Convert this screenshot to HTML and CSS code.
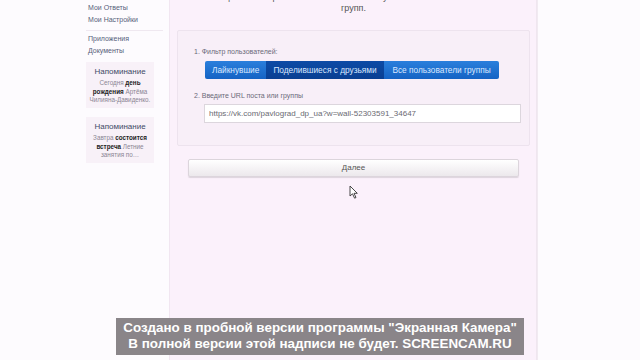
FILE: index.html
```html
<!DOCTYPE html>
<html lang="ru">
<head>
    <meta charset="UTF-8">
    <title>Парсер пользователей</title>
    <link rel="stylesheet" href="styles.css">
</head>
<body>
    <div class="page">
        <!-- Left column -->
        <div class="side">
            <div class="menu">
                <a class="menu-link">Мои Ответы</a>
                <a class="menu-link">Мои Настройки</a>
            </div>
            <div class="menu menu-second">
                <a class="menu-link">Приложения</a>
                <a class="menu-link">Документы</a>
            </div>
            <div class="remind">
                <div class="remind-title">Напоминание</div>
                <div class="remind-text">Сегодня <b>день рождения</b> Артёма Чилияна-Давиденко.</div>
            </div>
            <div class="remind">
                <div class="remind-title">Напоминание</div>
                <div class="remind-text">Завтра <b>состоится встреча</b> Летние занятия по…</div>
            </div>
        </div>

        <!-- Main -->
        <div class="main">
            <div class="intro">
                <div>с помощью этого приложения вы можете получить список пользователей из</div>
                <div>групп.</div>
            </div>
            <div class="form-box">
                <div class="step">1. Фильтр пользователей:</div>
                <div class="tabs">
                    <button class="tab">Лайкнувшие</button>
                    <button class="tab active">Поделившиеся с друзьями</button>
                    <button class="tab">Все пользователи группы</button>
                </div>
                <div class="step">2. Введите URL поста или группы</div>
                <input class="url" type="text" value="https://vk.com/pavlograd_dp_ua?w=wall-52303591_34647">
            </div>
            <div class="next-row">
                <button class="next">Далее</button>
            </div>
            <svg class="cursor" width="10" height="15" viewBox="0 0 10 15">
                <path d="M1 1 L1 11 L3.5 8.8 L5.6 13.2 L7 12.5 L5 8.3 L8.3 8.3 Z" fill="#fff" stroke="#333" stroke-width="0.9"/>
            </svg>
        </div>

        <div class="right"></div>
    </div>

    <div class="watermark">
        Создано в пробной версии программы "Экранная Камера"<br>
        В полной версии этой надписи не будет. SCREENCAM.RU
    </div>
</body>
</html>
```

FILE: styles.css
```css
/* General */
* {
    margin: 0;
    padding: 0;
    box-sizing: border-box;
}

body {
    font-family: "Liberation Sans", Arial, sans-serif;
    background: #fdfbfe;
    width: 640px;
    height: 360px;
    overflow: hidden;
    position: relative;
}

.page {
    display: flex;
    height: 360px;
}

/* Left column */
.side {
    width: 169px;
    padding: 2px 0 0 86px;
}

.menu {
    display: flex;
    flex-direction: column;
    padding: 0 0 4px 2px;
    border-bottom: 1px solid #efe8f0;
    margin-right: 6px;
}

.menu-second {
    border-bottom: none;
    padding-top: 2px;
}

.menu-link {
    font-size: 7px;
    color: #56607a;
    line-height: 12px;
}

.remind {
    width: 68px;
    height: 46px;
    background: #f8f1f8;
    text-align: center;
    padding: 5px 2px 0;
    margin-top: 1px;
    margin-bottom: 9px;
}

.remind-title {
    font-size: 8px;
    color: #3e4a66;
    margin-bottom: 3px;
}

.remind-text {
    font-size: 6.3px;
    line-height: 8.5px;
    color: #8a8593;
}

.remind-text b {
    color: #222;
}

/* Main */
.main {
    width: 368px;
    background: #fbf1fb;
    border-left: 1px solid #f1e6f1;
    border-right: 1px solid #efe6ef;
    padding: 0 6px 0 7px;
    position: relative;
}

.intro {
    text-align: center;
    font-size: 9px;
    color: #555;
    line-height: 11px;
    padding-top: 3px;
    margin-top: -11px;
    height: 41px;
}

.form-box {
    background: #f8eff8;
    border: 1px solid #ede3ee;
    border-radius: 2px;
    height: 116px;
    padding: 16px 0 0 16px;
}

.step {
    font-size: 7px;
    color: #6b6a78;
    line-height: 10px;
}

.tabs {
    display: flex;
    margin: 4px 0 12px 11px;
}

.tab {
    font-family: "Liberation Sans", Arial, sans-serif;
    font-size: 8.3px;
    height: 18px;
    border: none;
    color: #d9e7ff;
    background: linear-gradient(#2a7fdc, #1563c4);
    padding: 0 7px;
}

.tab:first-child {
    border-radius: 2px 0 0 2px;
    width: 61px;
}

.tab:last-child {
    border-radius: 0 2px 2px 0;
    width: 115px;
}

.tab.active {
    background: linear-gradient(#0d4ba6, #093f92);
    width: 118px;
}

.url {
    display: block;
    margin: 3px 0 0 10px;
    width: 317px;
    height: 19px;
    border: 1px solid #dcd6dd;
    background: #fff;
    font-family: "Liberation Sans", Arial, sans-serif;
    font-size: 8px;
    color: #6a6a72;
    padding: 0 4px;
}

.next-row {
    padding: 10px 11px 0 11px;
}

.next {
    width: 331px;
    height: 18px;
    border: 1px solid #dcd5dc;
    border-radius: 2px;
    background: linear-gradient(#fff, #ece8ec);
    box-shadow: 0 1px 1px rgba(0, 0, 0, 0.12);
    font-family: "Liberation Sans", Arial, sans-serif;
    font-size: 8px;
    color: #555;
}

.cursor {
    position: absolute;
    left: 179px;
    top: 185px;
}

.right {
    flex: 1;
    border-left: 1px solid #f1eaf1;
}

/* Overlay caption */
.watermark {
    position: absolute;
    left: 116px;
    top: 318px;
    width: 408px;
    height: 37px;
    background: #8a8589;
    color: #fff;
    font-weight: bold;
    font-size: 13.4px;
    line-height: 16px;
    text-align: center;
    padding-top: 2px;
}
```
